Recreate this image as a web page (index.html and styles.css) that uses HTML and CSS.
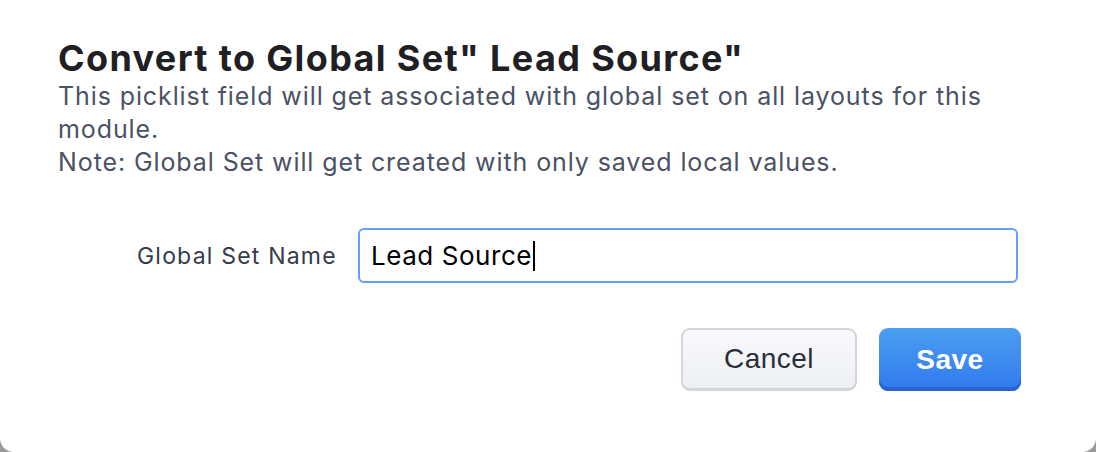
FILE: index.html
```html
<!DOCTYPE html>
<html lang="en">
<head>
    <meta charset="UTF-8">
    <meta name="viewport" content="width=device-width, initial-scale=1.0">
    <title>Convert to Global Set</title>
    <link rel="stylesheet" href="styles.css">
</head>
<body>
    <div class="dialog">
        <h1 class="dialog-title">Convert to Global Set" Lead Source"</h1>
        <p class="dialog-desc">This picklist field will get associated with global set on all layouts for this module.<br>Note: Global Set will get created with only saved local values.</p>

        <div class="field-row">
            <label for="setName">Global Set Name</label>
            <div class="input-box" id="setName"><span class="input-text">Lead Source</span><span class="caret"></span></div>
        </div>

        <div class="actions">
            <button class="btn btn-cancel">Cancel</button>
            <button class="btn btn-save">Save</button>
        </div>
    </div>
</body>
</html>
```

FILE: styles.css
```css
html, body {
    margin: 0;
    height: 100%;
    background: #9a9a9a;
}
body {
    font-family: Inter, "Noto Sans", sans-serif;
}
.dialog {
    box-sizing: border-box;
    width: 1096px;
    height: 452px;
    background: #fff;
    border-radius: 0 0 14px 14px;
    padding: 36px 58px 0;
}
.dialog-title {
    margin: 0;
    font-size: 36px;
    font-weight: 700;
    color: #1f2023;
    line-height: 44px;
    letter-spacing: 1.35px;
}
.dialog-desc {
    margin: 0;
    font-size: 25px;
    line-height: 33px;
    color: #4a5263;
    letter-spacing: 0.9px;
    max-width: 960px;
}
.field-row {
    display: flex;
    align-items: center;
    margin-top: 49px;
    padding-left: 79px;
}
.field-row label {
    width: 221px;
    font-size: 23px;
    color: #343b4a;
    letter-spacing: 1.2px;
}
.input-box {
    box-sizing: border-box;
    display: flex;
    align-items: center;
    width: 660px;
    height: 55px;
    border: 2px solid #63a0f1;
    border-radius: 6px;
    padding-left: 11px;
    font-size: 26px;
    letter-spacing: 0.55px;
    color: #000;
}
.caret {
    display: inline-block;
    width: 2px;
    height: 30px;
    background: #000;
    margin-left: 1px;
}
.actions {
    display: flex;
    justify-content: flex-end;
    gap: 22px;
    margin-top: 45px;
    padding-right: 17px;
}
.btn {
    box-sizing: border-box;
    height: 63px;
    font-family: "Liberation Sans", Arial, sans-serif;
    font-size: 28px;
    letter-spacing: 0.5px;
    border-radius: 9px;
    cursor: pointer;
}
.btn-cancel {
    width: 176px;
    color: #2a2e38;
    background: linear-gradient(to bottom, #f9f9fc, #eef0f4);
    border: 2px solid #d3d5dd;
    border-bottom-width: 3px;
}
.btn-save {
    width: 142px;
    color: #fff;
    font-weight: 700;
    border: none;
    background: linear-gradient(to bottom, #4b9ef0, #3079ef);
    box-shadow: inset 0 -4px 0 #2b62cf;
}
```
